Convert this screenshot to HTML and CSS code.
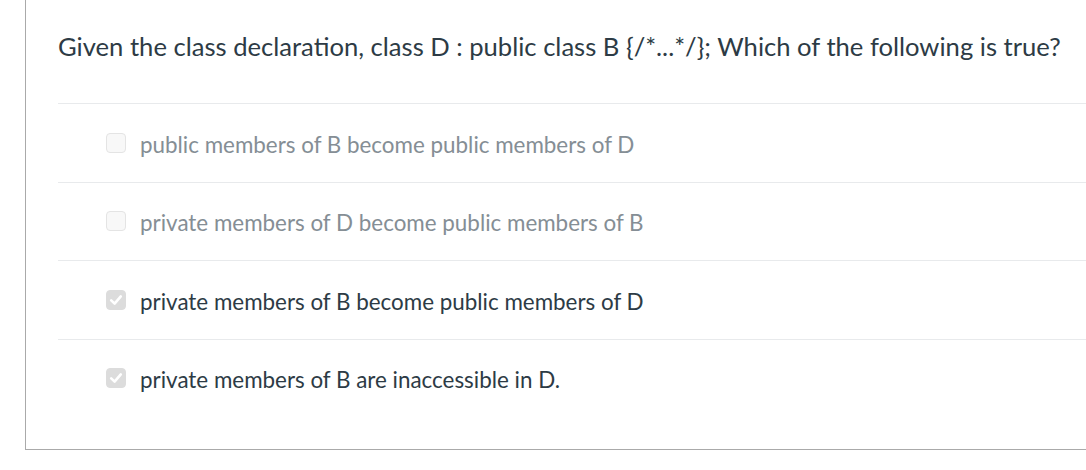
FILE: index.html
```html
<!DOCTYPE html>
<html lang="en">
<head>
    <meta charset="UTF-8">
    <meta name="viewport" content="width=device-width, initial-scale=1.0">
    <title>Quiz Question</title>
    <link rel="stylesheet" href="styles.css">
</head>
<body>
    <div class="question-card">
        <div class="question-text">Given the class declaration, class D : public class B {/*...*/}; Which of the following is true?</div>

        <div class="answers">
            <div class="answer">
                <span class="check"></span>
                <span class="answer-text">public members of B become public members of D</span>
            </div>
            <div class="answer">
                <span class="check"></span>
                <span class="answer-text">private members of D become public members of B</span>
            </div>
            <div class="answer selected">
                <span class="check">
                    <svg viewBox="0 0 20 20" width="20" height="20"><path d="M5.2 10.4 L8.6 13.6 L14.8 6.4" fill="none" stroke="#fff" stroke-width="2.6" stroke-linecap="round" stroke-linejoin="round"/></svg>
                </span>
                <span class="answer-text">private members of B become public members of D</span>
            </div>
            <div class="answer selected">
                <span class="check">
                    <svg viewBox="0 0 20 20" width="20" height="20"><path d="M5.2 10.4 L8.6 13.6 L14.8 6.4" fill="none" stroke="#fff" stroke-width="2.6" stroke-linecap="round" stroke-linejoin="round"/></svg>
                </span>
                <span class="answer-text">private members of B are inaccessible in D.</span>
            </div>
        </div>
    </div>
</body>
</html>
```

FILE: styles.css
```css
body {
    margin: 0;
    background-color: #fff;
    font-family: Lato, "Open Sans", sans-serif;
    color: #2d3b45;
    overflow: hidden;
}

.question-card {
    margin-left: 25px;
    height: 450px;
    box-sizing: border-box;
    border-left: 1px solid #aaaaaa;
    border-bottom: 1px solid #aaaaaa;
    padding: 31px 0 0 32px;
}

.question-text {
    font-size: 25.6px;
    line-height: 31px;
    margin-bottom: 41px;
}

.answer {
    display: flex;
    align-items: center;
    height: 78.5px;
    box-sizing: border-box;
    border-top: 1px solid #e8eaec;
    padding-left: 48px;
}

.check {
    width: 20px;
    height: 20px;
    box-sizing: border-box;
    border: 1px solid #e4e4e4;
    border-radius: 4px;
    background-color: #f8f8f8;
    margin-right: 14px;
    display: flex;
}

.answer.selected .check {
    background-color: #dcdcdc;
    border-color: #dcdcdc;
}

.check svg {
    margin: -1px;
}

.answer-text {
    font-size: 22.4px;
    line-height: 27px;
    padding-top: 3px;
    color: #858e95;
}

.answer.selected .answer-text {
    color: #2d3b45;
}
```
